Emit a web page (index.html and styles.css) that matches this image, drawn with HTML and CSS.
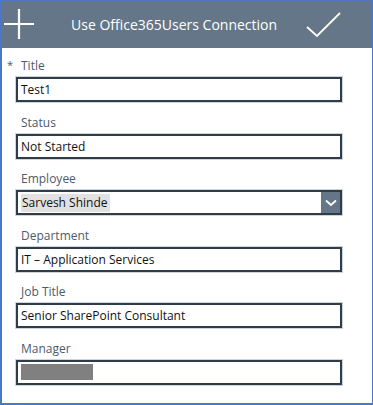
FILE: index.html
```html
<!DOCTYPE html>
<html lang="en">
<head>
  <meta charset="UTF-8">
  <meta name="viewport" content="width=device-width, initial-scale=1">
  <title>Use Office365Users Connection</title>
  <link rel="stylesheet" href="styles.css">
</head>
<body>
  <div class="screen">
    <div class="header">
      <svg class="icon-add" width="32" height="32" viewBox="0 0 32 32">
        <path d="M1 16H31M16 1V31" stroke="#fff" stroke-width="2.2" fill="none"/>
      </svg>
      <div class="header-title">Use Office365Users Connection</div>
      <svg class="icon-check" width="36" height="28" viewBox="0 0 36 28">
        <path d="M1 15L11 24L34 1" stroke="#fff" stroke-width="1.8" fill="none"/>
      </svg>
    </div>

    <div class="form">
      <div class="field">
        <div class="label"><span class="req">*</span>Title</div>
        <div class="box">Test1</div>
      </div>
      <div class="field">
        <div class="label">Status</div>
        <div class="box">Not Started</div>
      </div>
      <div class="field">
        <div class="label">Employee</div>
        <div class="box dropdown">
          <span class="selected">Sarvesh Shinde</span>
          <span class="drop-btn">
            <svg width="12" height="8" viewBox="0 0 12 8">
              <path d="M1 1.5L6 6L11 1.5" stroke="#fff" stroke-width="1.8" fill="none"/>
            </svg>
          </span>
        </div>
      </div>
      <div class="field">
        <div class="label">Department</div>
        <div class="box">IT – Application Services</div>
      </div>
      <div class="field">
        <div class="label">Job Title</div>
        <div class="box">Senior SharePoint Consultant</div>
      </div>
      <div class="field">
        <div class="label">Manager</div>
        <div class="box"><span class="redacted"></span></div>
      </div>
    </div>
  </div>
</body>
</html>
```

FILE: styles.css
```css
html, body {
  margin: 0;
  padding: 0;
  background: #fff;
}
body {
  font-family: "Open Sans", "Noto Sans", sans-serif;
}
.screen {
  width: 373px;
  height: 405px;
  box-sizing: border-box;
  border: 1px solid #4a78c8;
  border-left-width: 2px;
  border-bottom-width: 2px;
  overflow: hidden;
}
.header {
  height: 47px;
  background: #647687;
  display: flex;
  align-items: center;
  color: #fff;
}
.icon-add {
  margin-left: 1px;
  margin-top: -2px;
}
.header-title {
  font-size: 14px;
  margin-left: 36px;
  width: 232px;
  white-space: nowrap;
}
.icon-check {
  margin-left: 3px;
  margin-top: 3px;
}
.form {
  padding: 8px 0 0 14px;
}
.field {
  margin-bottom: 10.6px;
  width: 326px;
}
.label {
  position: relative;
  height: 20px;
  line-height: 20px;
  font-size: 12px;
  color: #4b5b6b;
  padding-left: 5px;
  margin-bottom: 1px;
}
.req {
  position: absolute;
  left: -9px;
  top: -1px;
  font-size: 11px;
}
.box {
  height: 25px;
  box-sizing: border-box;
  border: 2px solid #2f3c4a;
  box-shadow: 0 0 0 1px #cfd4d9;
  font-size: 12px;
  line-height: 21px;
  padding-left: 3px;
  color: #111;
  display: flex;
  align-items: center;
}
.dropdown {
  padding-right: 0;
  justify-content: space-between;
}
.selected {
  background: #e1e1e1;
  padding: 0 2px 0 1px;
  line-height: 18px;
}
.drop-btn {
  width: 19px;
  height: 21px;
  background: #647687;
  display: flex;
  align-items: center;
  justify-content: center;
}
.redacted {
  display: block;
  width: 72px;
  height: 16px;
  background: #808080;
}
```
